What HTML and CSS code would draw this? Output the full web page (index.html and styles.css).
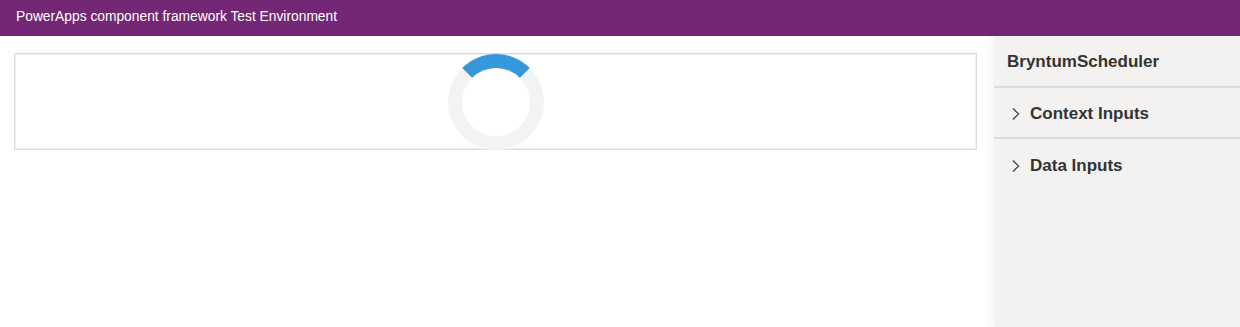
FILE: index.html
```html
<!DOCTYPE html>
<html>
<head>
<meta charset="utf-8">
<link rel="stylesheet" href="styles.css">
</head>
<body>
<div class="header">PowerApps component framework Test Environment</div>
<div class="main">
  <div class="content">
    <div class="control-box">
      <div class="spinner"></div>
    </div>
  </div>
  <aside class="panel">
    <div class="panel-title">BryntumScheduler</div>
    <div class="section">
      <svg class="chev" width="10" height="14" viewBox="0 0 10 14"><path d="M2 1.5 L7.5 7 L2 12.5" fill="none" stroke="#333" stroke-width="1.2"/></svg>
      <span>Context Inputs</span>
    </div>
    <div class="section">
      <svg class="chev" width="10" height="14" viewBox="0 0 10 14"><path d="M2 1.5 L7.5 7 L2 12.5" fill="none" stroke="#333" stroke-width="1.2"/></svg>
      <span>Data Inputs</span>
    </div>
  </aside>
</div>
</body>
</html>
```
FILE: styles.css
```css
html, body {
  margin: 0;
  padding: 0;
  height: 100%;
  font-family: "Liberation Sans", Arial, sans-serif;
  background: #fff;
}
.header {
  height: 36px;
  background: #742774;
  color: #fff;
  font-size: 13.8px;
  line-height: 34px;
  padding-left: 16px;
  box-sizing: border-box;
}
.main {
  display: flex;
  height: calc(100% - 36px);
}
.content {
  flex: 1;
  padding: 17px 17px 0 14px;
}
.control-box {
  border: 1px solid #dcdcdc;
  box-shadow: inset 0 0 0 1px #f0f0f0;
  height: 97px;
  box-sizing: border-box;
  display: flex;
  justify-content: center;
  align-items: center;
}
.spinner {
  width: 96px;
  height: 96px;
  box-sizing: border-box;
  border-radius: 50%;
  border: 14px solid #f3f3f3;
  border-top-color: #3498db;
}
.panel {
  width: 246px;
  background: #f3f2f1;
  box-shadow: -5px 0 8px rgba(0,0,0,0.04);
  color: #333;
}
.panel-title {
  height: 50px;
  line-height: 52px;
  padding-left: 13px;
  font-weight: bold;
  font-size: 17px;
  border-bottom: 2px solid #dedcdb;
}
.section {
  height: 49px;
  display: flex;
  align-items: center;
  padding-left: 17px;
  padding-top: 2px;
  box-sizing: border-box;
  height: 51px;
  font-weight: bold;
  font-size: 17px;
  border-bottom: 2px solid #dedcdb;
}
.section:last-child {
  border-bottom: none;
}
.chev {
  margin-right: 9px;
}
```
